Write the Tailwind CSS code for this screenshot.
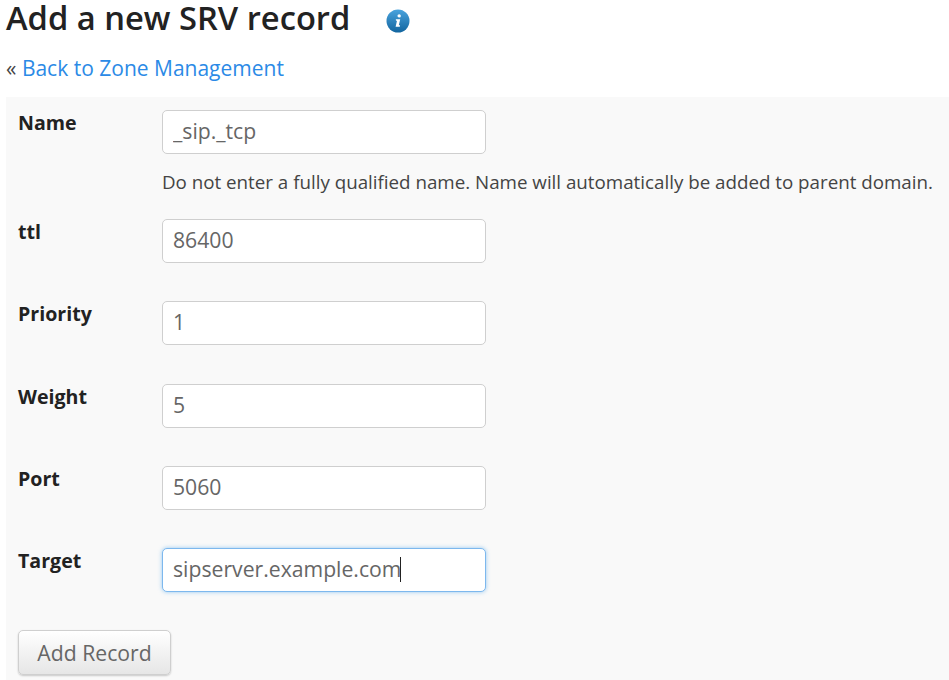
<!DOCTYPE html>
<html lang="en">
<head>
    <meta charset="UTF-8">
    <title>Add a new SRV record</title>
    <script src="https://cdn.jsdelivr.net/npm/@tailwindcss/browser@4"></script>
</head>
<body class="bg-white font-['Open_Sans',sans-serif] overflow-hidden h-[680px]">
    <div class="h-[36px] pl-[6px] flex items-center">
        <h1 class="text-[32.7px] leading-[36px] font-semibold text-[#222222]">Add a new SRV record</h1>
        <svg class="ml-[35px] mt-[6px]" width="26" height="26" viewBox="0 0 26 26">
            <defs>
                <linearGradient id="infoblue" x1="0" y1="0" x2="0" y2="1">
                    <stop offset="0" stop-color="#4aa3dd"/>
                    <stop offset="1" stop-color="#12659f"/>
                </linearGradient>
            </defs>
            <circle cx="13" cy="13" r="11.5" fill="url(#infoblue)"/>
            <path d="M14.2 6.2a1.7 1.7 0 1 1-.1 3.4 1.7 1.7 0 0 1 .1-3.4zM10.8 11.2h4.4l-1.4 6h1.3l-.3 1.6h-4.2l1.4-6h-1z" fill="#fff"/>
        </svg>
    </div>
    <p class="pl-[6px] mt-[18px] text-[21px] leading-[28px] text-[#444444]">« <a href="#" class="text-[#2b8ae6]">Back to Zone Management</a></p>
    <form class="ml-[6px] mt-[15px] bg-[#f9f9f9] pl-[12px] pt-[13px] h-[583px]">
        <div class="flex">
            <label class="w-[144px] text-[19.6px] leading-[26px] font-bold text-[#222222]">Name</label>
            <div>
                <input class="block w-[324px] h-[44px] px-[10px] pb-[3px] bg-white border border-[#cfcfcf] rounded-[5px] text-[21.2px] text-[#666666]" value="_sip._tcp">
                <p class="mt-[16px] text-[18.75px] leading-[24px] text-[#444444] whitespace-nowrap">Do not enter a fully qualified name. Name will automatically be added to parent domain.</p>
            </div>
        </div>
        <div class="flex mt-[25px]">
            <label class="w-[144px] text-[19.6px] leading-[26px] font-bold text-[#222222]">ttl</label>
            <input class="block w-[324px] h-[44px] px-[10px] pb-[3px] bg-white border border-[#cfcfcf] rounded-[5px] text-[21.2px] text-[#666666]" value="86400">
        </div>
        <div class="flex mt-[38px]">
            <label class="w-[144px] text-[19.6px] leading-[26px] font-bold text-[#222222]">Priority</label>
            <input class="block w-[324px] h-[44px] px-[10px] pb-[3px] bg-white border border-[#cfcfcf] rounded-[5px] text-[21.2px] text-[#666666]" value="1">
        </div>
        <div class="flex mt-[39px]">
            <label class="w-[144px] text-[19.6px] leading-[26px] font-bold text-[#222222]">Weight</label>
            <input class="block w-[324px] h-[44px] px-[10px] pb-[3px] bg-white border border-[#cfcfcf] rounded-[5px] text-[21.2px] text-[#666666]" value="5">
        </div>
        <div class="flex mt-[38px]">
            <label class="w-[144px] text-[19.6px] leading-[26px] font-bold text-[#222222]">Port</label>
            <input class="block w-[324px] h-[44px] px-[10px] pb-[3px] bg-white border border-[#cfcfcf] rounded-[5px] text-[21.2px] text-[#666666]" value="5060">
        </div>
        <div class="flex mt-[38px]">
            <label class="w-[144px] text-[19.6px] leading-[26px] font-bold text-[#222222]">Target</label>
            <div class="relative">
                <input class="block w-[324px] h-[44px] px-[10px] pb-[3px] bg-white border border-[#7db8ee] rounded-[5px] text-[21.2px] text-[#666666] shadow-[0_0_4px_rgba(82,168,236,0.6)]" value="sipserver.example.com">
                <span class="absolute left-[238px] top-[9px] w-[1px] h-[25px] bg-[#222222]"></span>
            </div>
        </div>
        <button type="button" class="block mt-[38px] w-[153px] h-[45px] border border-[#cfcfcf] rounded-[5px] bg-gradient-to-b from-white to-[#e6e6e6] shadow-[0_1px_2px_rgba(0,0,0,0.2)] text-[21.2px] text-[#666666]">Add Record</button>
    </form>
</body>
</html>
